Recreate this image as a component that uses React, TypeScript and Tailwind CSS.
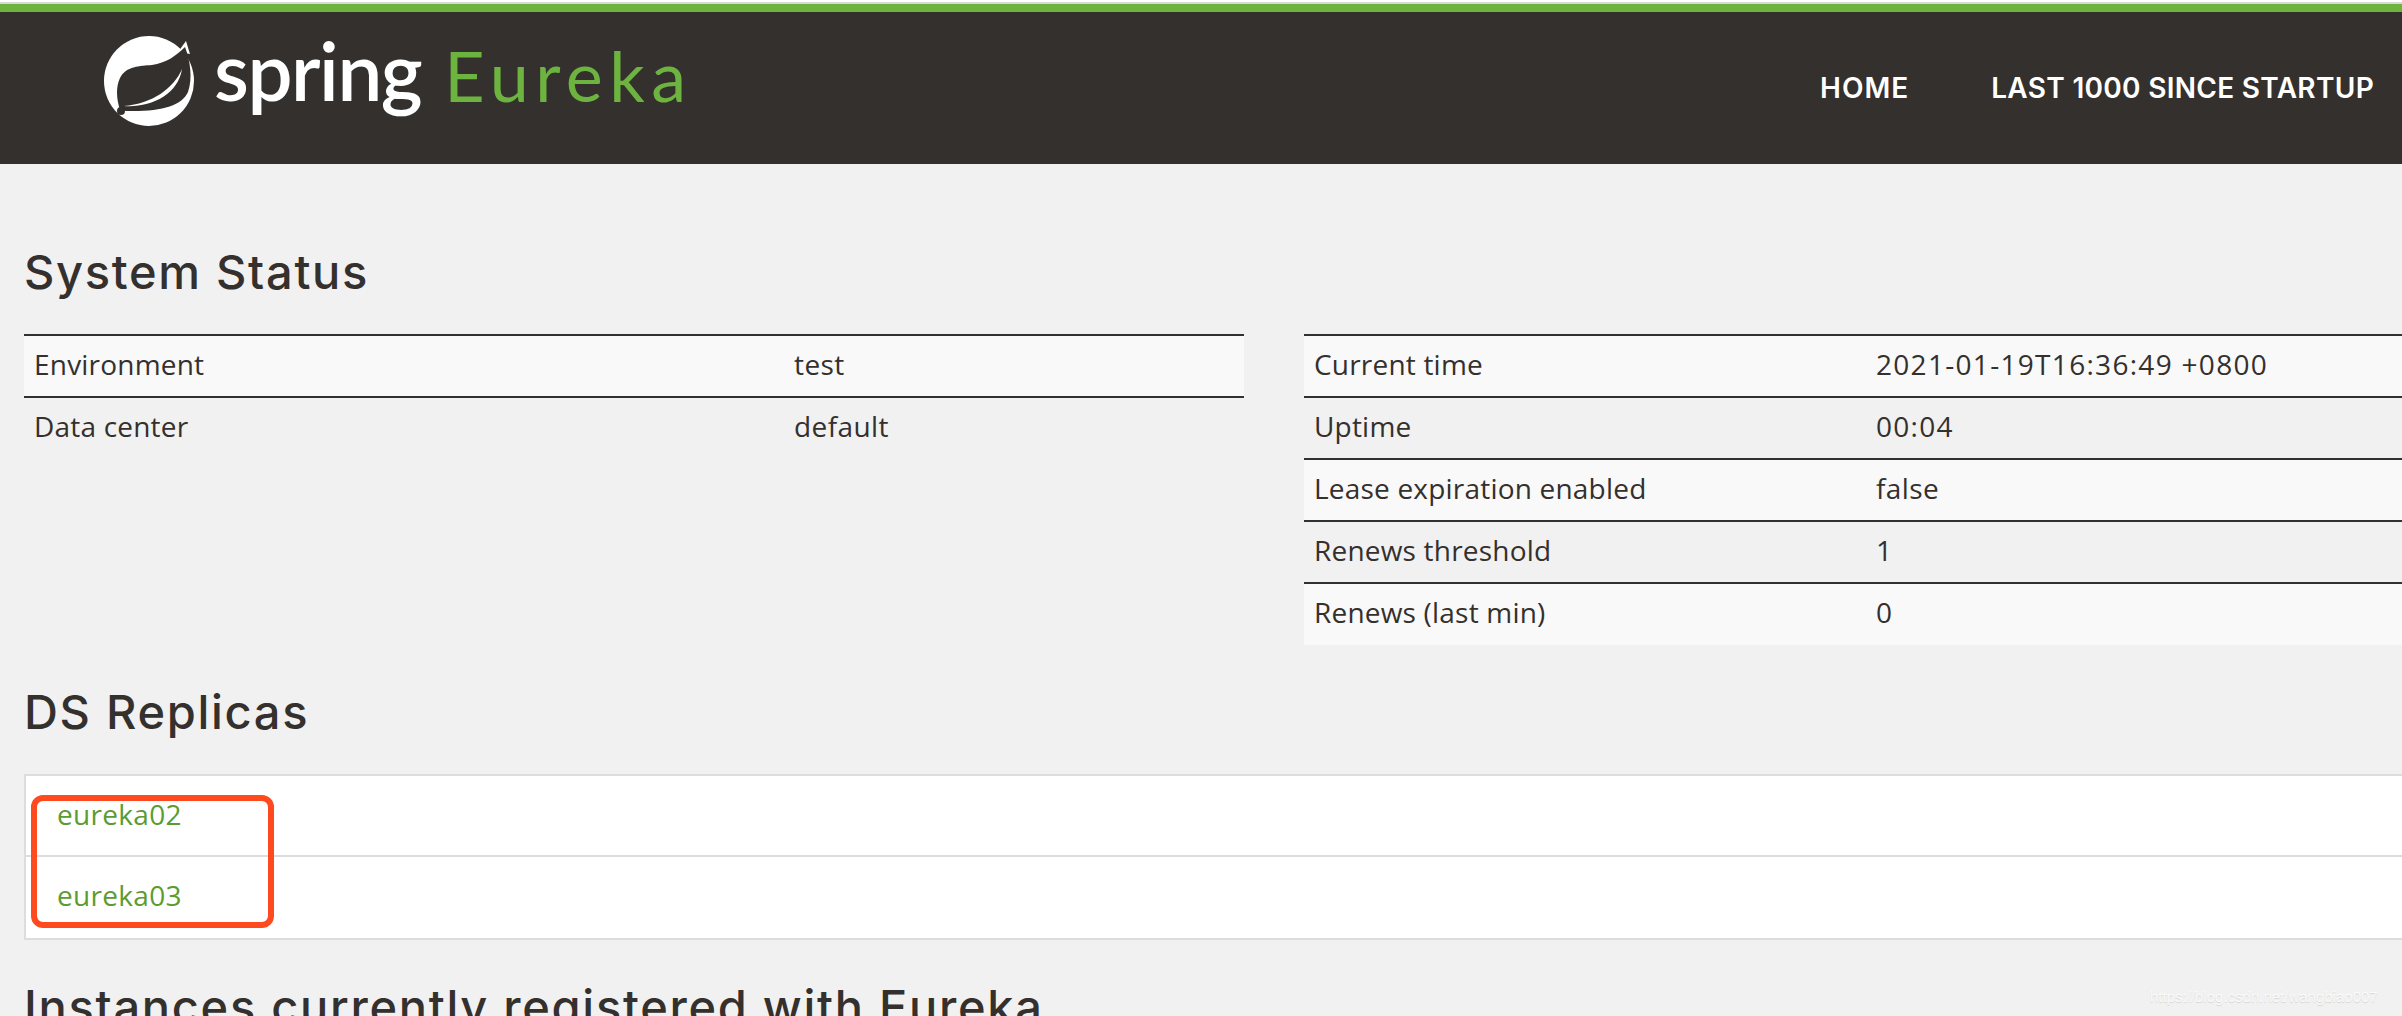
const bodyFont = "font-['Open_Sans','Liberation_Sans',sans-serif]";

const leftRows = [
  ["Environment", "test"],
  ["Data center", "default"],
];

const rightRows = [
  ["Current time", "2021-01-19T16:36:49 +0800"],
  ["Uptime", "00:04"],
  ["Lease expiration enabled", "false"],
  ["Renews threshold", "1"],
  ["Renews (last min)", "0"],
];

function SpringLeaf() {
  return (
    <svg viewBox="0 0 130 120" className="h-[120px] w-[130px] shrink-0">
      <circle cx="59" cy="61" r="45" fill="#ffffff" />
      <path d="M88 32 L96 21 L100 34 Z" fill="#ffffff" />
      <path
        d="M30 90 C26 78 26 66 30 58 C36 46 50 46 62 45 C76 43 86 36 95 27 C100 40 103 58 98 72 C92 86 70 92 36 91 Z"
        fill="#34302d"
      />
      <path d="M92 49 C84 68 62 84 34 86 C60 88 88 75 92 49 Z" fill="#ffffff" />
      <circle cx="31" cy="91" r="4" fill="#34302d" />
    </svg>
  );
}

function StatusTable({ rows, labelWidth }: { rows: string[][]; labelWidth: string }) {
  return (
    <table className="w-full table-fixed border-collapse">
      <tbody>
        {rows.map(([label, value], i) => (
          <tr key={label} className={i % 2 === 0 ? "bg-[#f9f9f9]" : ""}>
            <td className={`h-[62px] border-t-2 border-[#34302d] pb-[5px] pl-[10px] tracking-[0.2px] ${labelWidth}`}>{label}</td>
            <td className={`h-[62px] border-t-2 border-[#34302d] pb-[5px] ${/\d/.test(value) ? "tracking-[1.3px]" : "tracking-[0.4px]"}`}>{value}</td>
          </tr>
        ))}
      </tbody>
    </table>
  );
}

export default function App() {
  return (
    <div className={`relative h-[1016px] w-[2402px] overflow-hidden bg-[#f1f1f1] text-[#34302d] ${bodyFont}`}>
      <div className="h-[2px] bg-white" />
      <div className="h-[2px] bg-[#d8d8d8]" />
      <div className="h-[8px] bg-[#6db33f]" />
      <header className="flex h-[152px] items-start bg-[#34302d]">
        <div className="ml-[90px] mt-[8px] flex items-start font-['Lato',sans-serif]">
          <SpringLeaf />
          <span className="-ml-[6px] mt-[10px] text-[80px] font-semibold leading-[80px] tracking-[-1.5px] text-white">spring</span>
          <span className="ml-[23px] mt-[15px] text-[70px] leading-[80px] tracking-[6.5px] text-[#6db33f]">Eureka</span>
        </div>
        <nav className="ml-auto mr-[28px] mt-[59px] flex gap-[82px] font-['Inter',sans-serif] text-[28px] font-semibold leading-[34px] tracking-[0.3px] text-white">
          <span className="tracking-[1px]">HOME</span>
          <span>LAST 1000 SINCE STARTUP</span>
        </nav>
      </header>

      <main className="pl-[24px] text-[28px]">
        <h1 className="mt-[81px] h-[54px] font-['Inter',sans-serif] text-[47px] font-medium leading-[54px] tracking-[1.7px]">System Status</h1>
        <div className="mt-[35px] grid grid-cols-[1220px_1098px] items-start gap-[60px]">
          <StatusTable rows={leftRows} labelWidth="w-[770px]" />
          <StatusTable rows={rightRows} labelWidth="w-[572px]" />
        </div>

        <h2 className="mt-[40px] h-[54px] font-['Inter',sans-serif] text-[47px] font-medium leading-[54px] tracking-[1.7px]">DS Replicas</h2>
        <div className="mt-[35px] w-[2400px] border-2 border-[#dddddd] bg-white tracking-[0.3px] text-[#5b9c31]">
          <div className="h-[81px] border-b-2 border-[#dddddd] pl-[31px] pt-[22px] leading-[32px]">eureka02</div>
          <div className="h-[81px] pl-[31px] pt-[22px] leading-[32px]">eureka03</div>
        </div>

        <h2 className="mt-[40px] h-[54px] font-['Inter',sans-serif] text-[47px] font-medium leading-[54px] tracking-[1.7px]">Instances currently registered with Eureka</h2>
      </main>

      <div className="absolute left-[31px] top-[795px] h-[133px] w-[243px] rounded-[12px] border-[6px] border-[#ff4a1f]" />
      <div className="absolute left-[2150px] top-[988px] font-['Liberation_Sans',sans-serif] text-[15px] leading-[18px] text-white/80 [text-shadow:0_1px_1px_rgba(0,0,0,0.12)]">
        https://blog.csdn.net/wangbiao007
      </div>
    </div>
  );
}
